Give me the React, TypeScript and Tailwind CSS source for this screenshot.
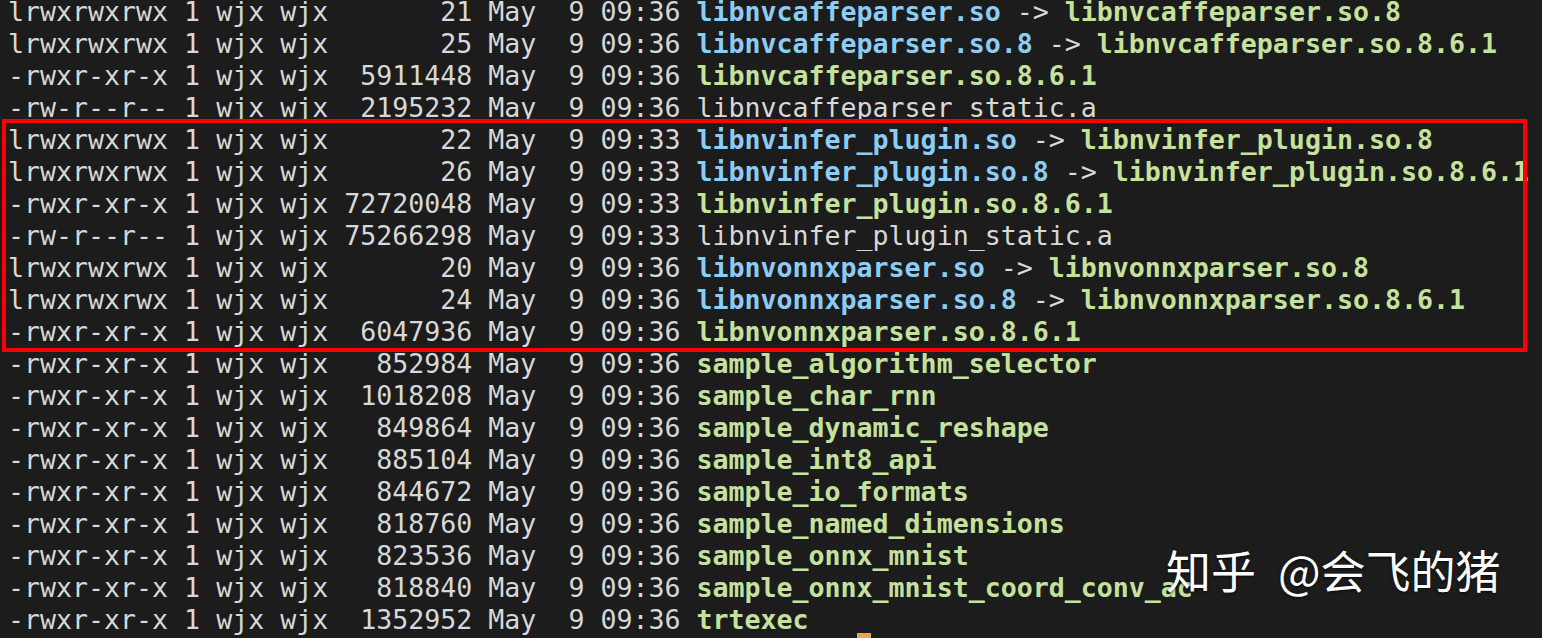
import React from "react";

type Kind = "plain" | "link" | "exec";

type Row = {
  perm: string;
  size: string;
  time: string;
  name: string;
  kind: Kind;
  target?: string;
};

const rows: Row[] = [
  { perm: "lrwxrwxrwx", size: "21", time: "09:36", name: "libnvcaffeparser.so", kind: "link", target: "libnvcaffeparser.so.8" },
  { perm: "lrwxrwxrwx", size: "25", time: "09:36", name: "libnvcaffeparser.so.8", kind: "link", target: "libnvcaffeparser.so.8.6.1" },
  { perm: "-rwxr-xr-x", size: "5911448", time: "09:36", name: "libnvcaffeparser.so.8.6.1", kind: "exec" },
  { perm: "-rw-r--r--", size: "2195232", time: "09:36", name: "libnvcaffeparser_static.a", kind: "plain" },
  { perm: "lrwxrwxrwx", size: "22", time: "09:33", name: "libnvinfer_plugin.so", kind: "link", target: "libnvinfer_plugin.so.8" },
  { perm: "lrwxrwxrwx", size: "26", time: "09:33", name: "libnvinfer_plugin.so.8", kind: "link", target: "libnvinfer_plugin.so.8.6.1" },
  { perm: "-rwxr-xr-x", size: "72720048", time: "09:33", name: "libnvinfer_plugin.so.8.6.1", kind: "exec" },
  { perm: "-rw-r--r--", size: "75266298", time: "09:33", name: "libnvinfer_plugin_static.a", kind: "plain" },
  { perm: "lrwxrwxrwx", size: "20", time: "09:36", name: "libnvonnxparser.so", kind: "link", target: "libnvonnxparser.so.8" },
  { perm: "lrwxrwxrwx", size: "24", time: "09:36", name: "libnvonnxparser.so.8", kind: "link", target: "libnvonnxparser.so.8.6.1" },
  { perm: "-rwxr-xr-x", size: "6047936", time: "09:36", name: "libnvonnxparser.so.8.6.1", kind: "exec" },
  { perm: "-rwxr-xr-x", size: "852984", time: "09:36", name: "sample_algorithm_selector", kind: "exec" },
  { perm: "-rwxr-xr-x", size: "1018208", time: "09:36", name: "sample_char_rnn", kind: "exec" },
  { perm: "-rwxr-xr-x", size: "849864", time: "09:36", name: "sample_dynamic_reshape", kind: "exec" },
  { perm: "-rwxr-xr-x", size: "885104", time: "09:36", name: "sample_int8_api", kind: "exec" },
  { perm: "-rwxr-xr-x", size: "844672", time: "09:36", name: "sample_io_formats", kind: "exec" },
  { perm: "-rwxr-xr-x", size: "818760", time: "09:36", name: "sample_named_dimensions", kind: "exec" },
  { perm: "-rwxr-xr-x", size: "823536", time: "09:36", name: "sample_onnx_mnist", kind: "exec" },
  { perm: "-rwxr-xr-x", size: "818840", time: "09:36", name: "sample_onnx_mnist_coord_conv_ac", kind: "exec" },
  { perm: "-rwxr-xr-x", size: "1352952", time: "09:36", name: "trtexec", kind: "exec" },
];

const Line = ({ r }: { r: Row }) => {
  const prefix = `${r.perm} 1 wjx wjx ${r.size.padStart(8, " ")} May  9 ${r.time} `;
  return (
    <div className="h-8 whitespace-pre">
      <span className="text-[#d8d8d8]">{prefix}</span>
      {r.kind === "link" && (
        <>
          <span className="font-bold text-[#8bcdf6]">{r.name}</span>
          <span className="text-[#d8d8d8]"> -&gt; </span>
          <span className="font-bold text-[#c4e29c]">{r.target}</span>
        </>
      )}
      {r.kind === "exec" && <span className="font-bold text-[#c4e29c]">{r.name}</span>}
      {r.kind === "plain" && <span className="text-[#d8d8d8]">{r.name}</span>}
    </div>
  );
};

export default function App() {
  const before = rows.slice(0, 4);
  const boxed = rows.slice(4, 11);
  const after = rows.slice(11);

  return (
    <div className="relative h-[638px] w-[1542px] overflow-hidden bg-[#1c1c1c]">
      <div className="-mt-1 pl-2 font-['DejaVu_Sans_Mono',Menlo,monospace] text-[26.6px] leading-8">
        {before.map((r, i) => (
          <Line key={i} r={r} />
        ))}
        <div className="relative">
          {boxed.map((r, i) => (
            <Line key={i} r={r} />
          ))}
          <div className="pointer-events-none absolute -top-[5px] -bottom-1 left-[-6px] w-[1525px] border-4 border-[#fa0000]" />
        </div>
        {after.map((r, i) => (
          <Line key={i} r={r} />
        ))}
        <div className="h-8 whitespace-pre">
          <span className="text-[#d8d8d8]">{" ".repeat(53)}</span>
          <span className="inline-block h-7 w-[14px] -translate-y-[3px] bg-[#e9a35c] align-top" />
        </div>
      </div>

      <div className="absolute left-[1166px] top-[544px] flex font-['Noto_Sans_CJK_SC','Noto_Sans',sans-serif] text-[45px] leading-[52px] text-white [text-shadow:0_1px_3px_rgba(0,0,0,0.7)]">
        <span>知乎</span>
        <span className="ml-[22px]">@会飞的猪</span>
      </div>
    </div>
  );
}
